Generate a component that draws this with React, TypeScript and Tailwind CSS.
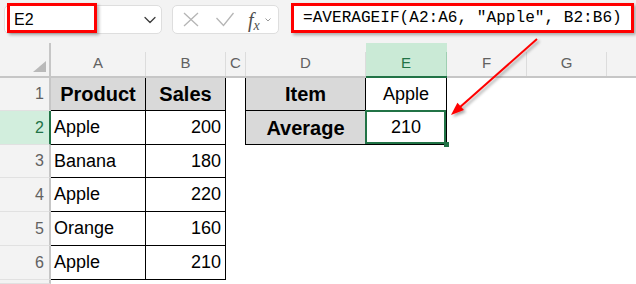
import React from 'react';
import { ChevronDown } from 'lucide-react';

const cols = ['A', 'B', 'C', 'D', 'E', 'F', 'G', ''];

const rows: { product: string; sales: number }[] = [
  { product: 'Apple', sales: 200 },
  { product: 'Banana', sales: 180 },
  { product: 'Apple', sales: 220 },
  { product: 'Orange', sales: 160 },
  { product: 'Apple', sales: 210 },
];

function Toolbar() {
  return (
    <div className="relative flex h-[43px] items-start bg-[#f3f3f3]">
      {/* name box */}
      <div className="ml-[4px] mt-[5px] flex h-[29px] w-[158px] items-center justify-between rounded-[5px] border border-[#dedede] bg-white pl-[9px] pr-[1px]">
        <span className="text-[16px] text-black">E2</span>
        <ChevronDown size={20} strokeWidth={1.5} className="text-[#3c3c3c]" />
      </div>
      <div className="absolute left-[7px] top-[3px] h-[30px] w-[90px] border-[3px] border-[#f00] shadow-[2px_2px_3px_rgba(0,0,0,0.3)]" />

      {/* cancel / enter / insert function */}
      <div className="ml-[10px] mt-[5px] flex h-[29px] w-[107px] items-center rounded-[5px] border border-[#dedede] bg-white pl-[10px]">
        <svg width="16" height="15" viewBox="0 0 16 15" className="mr-[17px]">
          <path d="M1 1 L15 14 M15 1 L1 14" stroke="#b5b5b5" strokeWidth="1.3" fill="none" />
        </svg>
        <svg width="18" height="15" viewBox="0 0 18 15" className="mr-[14px]">
          <path d="M0.5 6 L7.5 13.5 L17.5 1" stroke="#b5b5b5" strokeWidth="1.3" fill="none" />
        </svg>
        <span className="font-['Liberation_Serif',serif] text-[20px] italic leading-none text-[#505050]">
          f<span className="relative top-[3px] text-[14px]">x</span>
        </span>
        <svg width="6" height="4" viewBox="0 0 6 4" className="ml-[5px]">
          <path d="M0.5 0.5 L3 3 L5.5 0.5" stroke="#9a9a9a" strokeWidth="1" fill="none" />
        </svg>
      </div>

      {/* formula bar */}
      <div className="ml-[12px] mt-[3px] flex h-[30px] w-[343px] items-center border-[3px] border-[#f00] bg-white pl-[9px] shadow-[2px_2px_3px_rgba(0,0,0,0.3)]">
        <span className="whitespace-pre font-['Liberation_Mono',monospace] text-[16.1px] text-black">
          =AVERAGEIF(A2:A6, "Apple", B2:B6)
        </span>
      </div>
    </div>
  );
}

function ColHeader({ label, active, last }: { label: string; active?: boolean; last?: boolean }) {
  return (
    <div
      className={
        active
          ? 'flex border-b-2 border-[#217346] bg-[#caead6]'
          : 'flex border-b-2 border-[#c6c6c6] bg-[#f3f3f3]'
      }
    >
      <div
        className={
          active
            ? 'flex flex-1 items-center justify-center pt-[7px] text-[15px] text-[#217346]'
            : 'flex flex-1 items-center justify-center pt-[7px] text-[15px] text-[#616161]'
        }
      >
        {label}
      </div>
      {!last && <div className={active ? 'h-[24px] w-px self-end bg-[#9fcfb2]' : 'h-[24px] w-px self-end bg-[#dcdcdc]'} />}
    </div>
  );
}

function RowHeader({ n, active }: { n?: number; active?: boolean }) {
  return (
    <div
      className={
        active
          ? 'flex items-center justify-end border-b border-r-2 border-b-[#e1e1e1] border-r-[#217346] bg-[#d2eedd] pr-[5px] text-[16px] text-[#217346]'
          : 'flex items-center justify-end border-b border-r-2 border-b-[#e1e1e1] border-r-[#c6c6c6] bg-[#f3f3f3] pr-[5px] text-[16px] text-[#616161]'
      }
    >
      {n}
    </div>
  );
}

function Sheet() {
  return (
    <div className="grid flex-1 grid-cols-[51px_95px_80px_20px_120px_81px_80px_80px_1fr] grid-rows-[35px_33px_34px_33px_34px_34px_34px_1fr] font-['Liberation_Sans',Arial,sans-serif] text-black">
      {/* corner + column letters */}
      <div className="flex items-end justify-end border-b-2 border-r-2 border-[#c6c6c6] bg-[#f3f3f3] pb-[4px] pr-[3px]">
        <svg width="13" height="11" viewBox="0 0 13 11">
          <polygon points="13,0 13,11 0,11" fill="#b9b9b9" />
        </svg>
      </div>
      {cols.map((c, i) => (
        <ColHeader key={i} label={c} active={c === 'E'} last={i === cols.length - 1} />
      ))}

      {/* row 1 */}
      <RowHeader n={1} />
      <div className="flex items-center justify-center border-b border-r border-black bg-[#d9d9d9] text-[20px] font-bold">Product</div>
      <div className="flex items-center justify-center border-b border-r border-black bg-[#d9d9d9] text-[20px] font-bold">Sales</div>
      <div className="border-r border-black" />
      <div className="flex items-center justify-center border-b border-r border-black bg-[#d9d9d9] text-[20px] font-bold">Item</div>
      <div className="flex items-center justify-center border-b border-r border-black text-[18px]">Apple</div>
      <div />
      <div />
      <div />

      {/* rows 2-6 */}
      {rows.map((r, i) => (
        <React.Fragment key={i}>
          <RowHeader n={i + 2} active={i === 0} />
          <div className="flex items-center border-b border-r border-black pl-[3px] text-[18px]">{r.product}</div>
          <div className="flex items-center justify-end border-b border-r border-black pr-[4px] text-[18px]">{r.sales}</div>
          {i === 0 ? (
            <>
              <div className="border-r border-black" />
              <div className="flex items-center justify-center border-b border-r border-black bg-[#d9d9d9] text-[20px] font-bold">Average</div>
              <div className="relative flex items-center justify-center border-b border-r border-black text-[18px]">
                210
                <div className="absolute -left-px -top-px bottom-0 right-0 border-2 border-[#217346]" />
                <div className="absolute -bottom-[3px] -right-[3px] h-[5px] w-[5px] bg-[#217346]" />
              </div>
            </>
          ) : (
            <>
              <div />
              <div />
              <div />
            </>
          )}
          <div />
          <div />
          <div />
        </React.Fragment>
      ))}

      {/* partial row at the bottom */}
      <RowHeader />
      <div />
      <div />
      <div />
      <div />
      <div />
      <div />
      <div />
      <div />
    </div>
  );
}

export default function App() {
  return (
    <div className="relative flex h-[284px] w-[636px] flex-col overflow-hidden bg-white font-['Liberation_Sans',Arial,sans-serif]">
      <Toolbar />
      <Sheet />

      {/* callout arrow */}
      <svg className="pointer-events-none absolute left-0 top-0" width="636" height="284" viewBox="0 0 636 284">
        <defs>
          <filter id="arrowShadow" x="-20%" y="-20%" width="140%" height="140%">
            <feDropShadow dx="2" dy="2" stdDeviation="1.5" floodColor="#000" floodOpacity="0.35" />
          </filter>
        </defs>
        <g filter="url(#arrowShadow)">
          <line x1="537" y1="39" x2="459" y2="108" stroke="#f00" strokeWidth="2" />
          <polygon points="451,115 464,110 457.4,102.7" fill="#f00" />
        </g>
      </svg>
    </div>
  );
}
